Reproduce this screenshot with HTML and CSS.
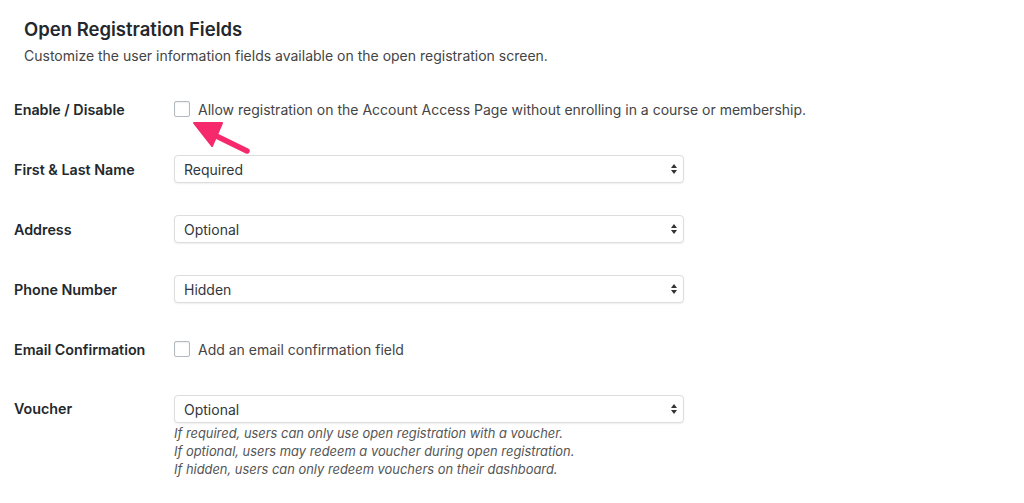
FILE: index.html
```html
<!DOCTYPE html>
<html>
<head>
<meta charset="utf-8">
<link rel="stylesheet" href="styles.css">
</head>
<body>
<div class="page">
  <div class="intro">
    <h2 class="title">Open Registration Fields</h2>
    <p class="desc">Customize the user information fields available on the open registration screen.</p>
  </div>
  <div class="form">
    <div class="row">
      <div class="label">Enable / Disable</div>
      <label class="check"><span class="box"></span>Allow registration on the Account Access Page without enrolling in a course or membership.</label>
    </div>
    <div class="row">
      <div class="label">First &amp; Last Name</div>
      <div class="select"><span>Required</span><svg class="updown" viewBox="0 0 6 10" width="6" height="10"><path d="M3 0 L6 4 H0 Z M0 6 H6 L3 10 Z" fill="#333"/></svg></div>
    </div>
    <div class="row">
      <div class="label">Address</div>
      <div class="select"><span>Optional</span><svg class="updown" viewBox="0 0 6 10" width="6" height="10"><path d="M3 0 L6 4 H0 Z M0 6 H6 L3 10 Z" fill="#333"/></svg></div>
    </div>
    <div class="row">
      <div class="label">Phone Number</div>
      <div class="select"><span>Hidden</span><svg class="updown" viewBox="0 0 6 10" width="6" height="10"><path d="M3 0 L6 4 H0 Z M0 6 H6 L3 10 Z" fill="#333"/></svg></div>
    </div>
    <div class="row">
      <div class="label">Email Confirmation</div>
      <label class="check"><span class="box"></span>Add an email confirmation field</label>
    </div>
    <div class="row row-top">
      <div class="label label-tall">Voucher</div>
      <div class="field">
        <div class="select"><span>Optional</span><svg class="updown" viewBox="0 0 6 10" width="6" height="10"><path d="M3 0 L6 4 H0 Z M0 6 H6 L3 10 Z" fill="#333"/></svg></div>
        <p class="help">If required, users can only use open registration with a voucher.<br>If optional, users may redeem a voucher during open registration.<br>If hidden, users can only redeem vouchers on their dashboard.</p>
      </div>
    </div>
  </div>
  <svg class="arrow" width="70" height="45" viewBox="0 0 70 45">
    <line x1="61" y1="36" x2="18" y2="15" stroke="#f5296b" stroke-width="5.5" stroke-linecap="round"/>
    <path d="M8 8 L36 8 L26 31 Z" fill="#f5296b" stroke="#f5296b" stroke-width="2" stroke-linejoin="round"/>
  </svg>
</div>
</body>
</html>
```

FILE: styles.css
```css
html, body {
  margin: 0;
  padding: 0;
  background: #ffffff;
}
body {
  font-family: Inter, "Noto Sans", "Liberation Sans", sans-serif;
  color: #444;
  font-size: 14px;
}
.page {
  position: relative;
  width: 1024px;
  height: 503px;
  overflow: hidden;
}
.intro {
  padding: 18px 0 0 24px;
}
.title {
  margin: 0;
  font-size: 18.5px;
  font-weight: 600;
  color: #23282d;
  line-height: 22px;
}
.desc {
  margin: 6px 0 0;
  font-size: 14px;
  line-height: 20px;
  color: #444;
}
.form {
  padding: 13px 0 0 14px;
}
.row {
  display: flex;
  align-items: center;
  height: 60px;
}
.row-top {
  align-items: flex-start;
  padding-top: 16px;
  height: auto;
}
.label {
  width: 160px;
  flex: none;
  font-weight: 600;
  color: #23282d;
  font-size: 14.3px;
}
.label-tall {
  line-height: 28px;
}
.check {
  display: flex;
  align-items: center;
  color: #444;
  font-size: 14px;
}
.box {
  width: 14px;
  height: 14px;
  border: 1px solid #b4b9be;
  border-radius: 2px;
  background: #fff;
  margin-right: 8px;
  box-shadow: inset 0 1px 2px rgba(0,0,0,0.07);
}
.select {
  height: 26px;
  border: 1px solid #ddd;
  border-radius: 4px;
  box-shadow: 0 1px 2px rgba(0,0,0,0.07);
  display: flex;
  align-items: center;
  justify-content: space-between;
  padding: 0 6px 0 9px;
  box-sizing: content-box;
  width: 493px;
  color: #32373c;
  font-size: 14px;
  background: #fff;
}
.updown {
  display: block;
}
.field {
  display: flex;
  flex-direction: column;
}
.help {
  margin: 2px 0 0;
  font-style: italic;
  font-size: 12.9px;
  line-height: 18px;
  color: #555;
}
.arrow {
  position: absolute;
  left: 186px;
  top: 115px;
}
```
